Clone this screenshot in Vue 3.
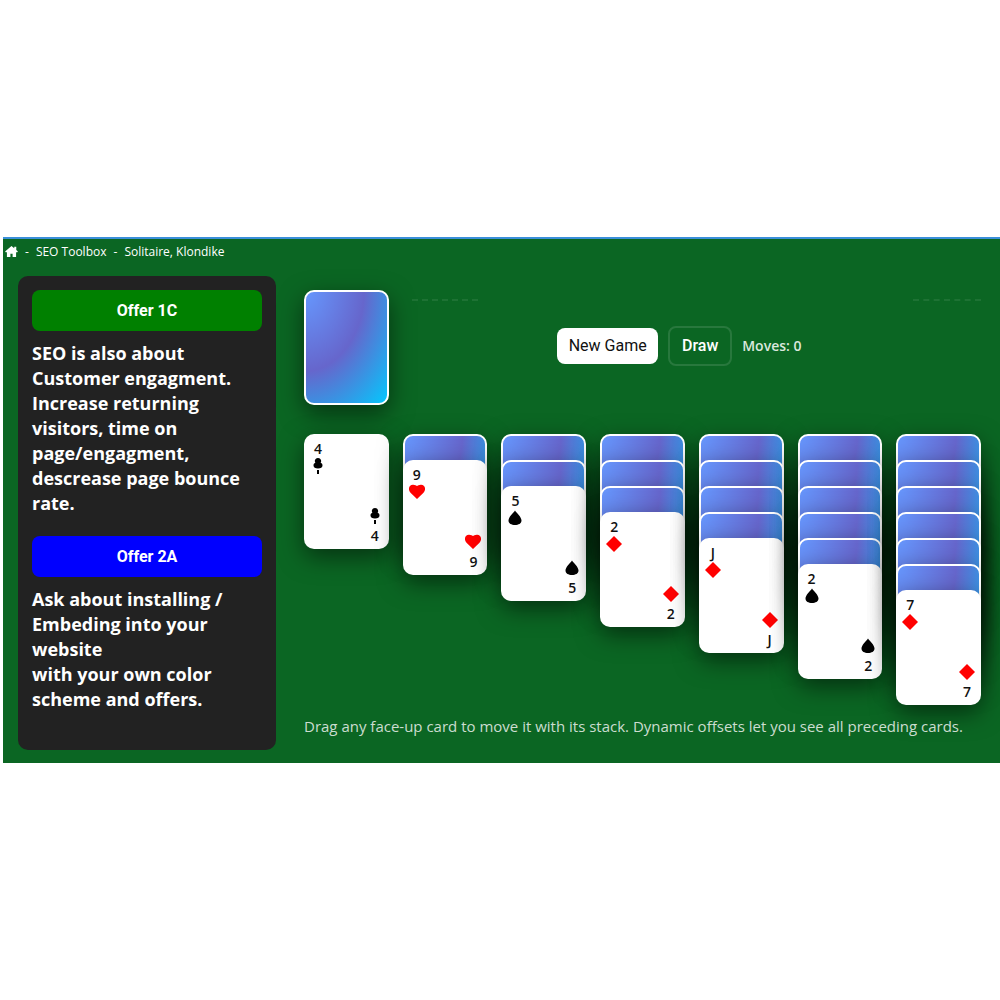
<script setup>
const columns = [
  { hidden: 0, rank: '4', suit: 'club' },
  { hidden: 1, rank: '9', suit: 'heart' },
  { hidden: 2, rank: '5', suit: 'spade' },
  { hidden: 3, rank: '2', suit: 'diamond' },
  { hidden: 4, rank: 'J', suit: 'diamond' },
  { hidden: 5, rank: '2', suit: 'spade' },
  { hidden: 6, rank: '7', suit: 'diamond' },
]

const suitPaths = {
  club: 'M8 0C10 0 11.200 1.500 11.200 3C11.200 3.800 10.900 4.400 10.600 4.800C12 5.300 12.500 6.300 12.500 7.500C12.500 9.300 10.800 10.500 8 10.500S3.500 9.300 3.500 7.500C3.500 6.300 4 5.300 5.400 4.800C5.100 4.400 4.800 3.800 4.800 3C4.800 1.500 6 0 8 0ZM7 12h2v4H7Z',
  heart: 'M8 15L1.500 8.800C-1.500 5.500 0 0.500 4.200 0.800Q7 1 8 2Q9 1 11.800 0.800C16 0.500 17.500 5.500 14.500 8.800Z',
  spade: 'M8 0.500C10 3.500 14.500 7 14.500 10.500C14.500 13.500 11.500 15 8 15S1.500 13.500 1.500 10.500C1.500 7 6 3.500 8 0.500Z',
  diamond: 'M8 0L16 8L8 16L0 8Z',
}
</script>

<template>
  <div class="page">
    <nav class="crumbs" aria-label="Breadcrumb">
      <a href="#" aria-label="Home">
        <svg class="home" viewBox="0 0 14 12" aria-hidden="true">
          <path d="M7 0L0 6L1 7.200L2 6.600V12H5.800V8.500H8.200V12H12V6.600L13 7.200L14 6L12.200 4.300V0.800H10V2.500Z" />
        </svg>
      </a>
      <span>-</span>
      <a href="#">SEO Toolbox</a>
      <span>-</span>
      <a href="#">Solitaire, Klondike</a>
    </nav>

    <div class="layout">
      <aside class="offers">
        <button class="offer green">Offer 1C</button>
        <p>SEO is also about<br>Customer engagment.<br>Increase returning<br>visitors, time on<br>page/engagment,<br>descrease page bounce<br>rate.</p>
        <button class="offer blue">Offer 2A</button>
        <p>Ask about installing /<br>Embeding into your<br>website<br>with your own color<br>scheme and offers.</p>
      </aside>

      <main class="game">
        <div class="top">
          <div class="card back"></div>
          <div class="waste"><div class="slot"></div></div>
          <div class="controls">
            <button class="new">New Game</button>
            <button class="draw">Draw</button>
            <span class="moves">Moves: 0</span>
          </div>
          <div class="foundation"><div class="slot"></div></div>
        </div>

        <div class="tableau">
          <div v-for="(col, i) in columns" :key="i" class="column">
            <div v-for="n in col.hidden" :key="n" class="card back"></div>
            <div class="card face" :class="col.suit">
              <div class="corner">
                <span>{{ col.rank }}</span>
                <svg viewBox="0 0 16 16"><path :d="suitPaths[col.suit]" /></svg>
              </div>
              <div class="corner end">
                <svg viewBox="0 0 16 16"><path :d="suitPaths[col.suit]" /></svg>
                <span>{{ col.rank }}</span>
              </div>
            </div>
          </div>
        </div>

        <p class="hint">Drag any face-up card to move it with its stack. Dynamic offsets let you see all preceding cards.</p>
      </main>
    </div>
  </div>
</template>

<style>
body {
  background: #fff;
}
</style>

<style scoped>
.page {
  box-sizing: border-box;
  margin: 237px 0 0 3px;
  border-top: 2px solid #3a8fd9;
  background: #0b6623;
  color: #fff;
  font-family: "Open Sans", "Noto Sans", sans-serif;
  padding-bottom: 13px;
}
p {
  margin: 0;
}
button {
  cursor: pointer;
}
.crumbs {
  display: flex;
  align-items: center;
  gap: 7px;
  height: 24px;
  padding-left: 2px;
  font-size: 12px;
  font-weight: 500;
}
.crumbs a {
  color: inherit;
  text-decoration: none;
}
.home {
  display: block;
  width: 13px;
  height: 11px;
  fill: #fff;
}
.layout {
  display: flex;
  align-items: stretch;
  gap: 28px;
  padding: 13px 19px 0 15px;
}
.offers {
  box-sizing: border-box;
  flex: 0 0 258px;
  padding: 14px 14px 18px;
  border-radius: 10px;
  background: #222;
}
.offers p {
  margin: 10px 0 20px;
  font-size: 18px;
  font-weight: 700;
  line-height: 25px;
  white-space: nowrap;
}
.offer {
  display: block;
  width: 100%;
  height: 41px;
  border: 0;
  border-radius: 8px;
  color: #fff;
  font: 700 16px Roboto, sans-serif;
}
.green {
  background: #008000;
}
.blue {
  background: #00f;
}
.game {
  flex: 1;
  min-width: 0;
  padding-top: 14px;
}
.top,
.tableau {
  display: grid;
  grid-template-columns: repeat(7, minmax(0, 1fr));
  column-gap: 14px;
}
.top {
  margin-bottom: 29px;
}
.waste {
  padding: 9px 9px 0;
}
.foundation {
  grid-column: 7;
  padding: 9px 0 0 17px;
}
.slot {
  height: 0;
  border-top: 2px dashed rgba(255, 255, 255, 0.08);
}
.controls {
  grid-column: 3 / 7;
  display: flex;
  align-items: center;
  justify-content: center;
  gap: 10px;
  padding: 0 25px 4px 0;
}
.new,
.draw {
  box-sizing: border-box;
  border-radius: 8px;
  font: 400 16px Roboto, sans-serif;
}
.new {
  width: 101px;
  height: 36px;
  padding: 0;
  border: 0;
  background: #fff;
  color: #111;
}
.draw {
  width: 64px;
  height: 40px;
  padding: 0;
  border: 2px solid rgba(255, 255, 255, 0.12);
  background: transparent;
  color: #fff;
  font-weight: 500;
}
.moves {
  font-size: 14px;
  font-weight: 600;
  color: #dbe8de;
}
.card {
  box-sizing: border-box;
  height: 115px;
  border-radius: 10px;
  box-shadow: 0 8px 24px rgba(0, 0, 0, 0.5);
}
.back {
  border: 2px solid #fff;
  background: radial-gradient(ellipse at top left, #6699ff, #6666cc 50%, #00ccff) border-box;
}
.column .card + .card {
  margin-top: -89px;
}
.face {
  display: flex;
  flex-direction: column;
  justify-content: space-between;
  padding: 6px 4px 4px;
  background: #fff;
  color: #111;
}
.corner {
  display: flex;
  flex-direction: column;
  align-items: center;
  width: 20px;
  font-size: 14px;
  font-weight: 600;
  line-height: 18px;
}
.corner svg {
  width: 16px;
  height: 16px;
  fill: #000;
}
.end {
  align-self: flex-end;
  gap: 3px;
}
.heart svg,
.diamond svg {
  fill: #f00;
}
.tableau {
  align-items: start;
}
.hint {
  margin-top: 10px;
  font-size: 15px;
  line-height: 22px;
  color: #ccddd0;
  white-space: nowrap;
}
</style>
